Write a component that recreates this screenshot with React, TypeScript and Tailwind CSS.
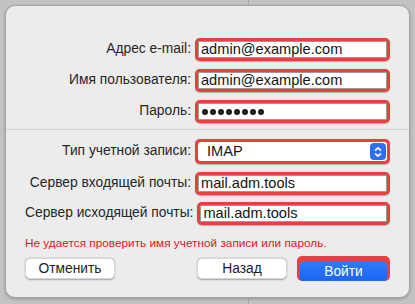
import React from 'react'

const font = { fontFamily: '"Liberation Sans", Arial, sans-serif' }

type FieldProps = { label: string; children: React.ReactNode; className?: string }

const Row = ({ label, children, className = '' }: FieldProps) => (
  <div className={`flex items-center ${className}`}>
    <div className="flex-1 text-right text-[13.8px] text-[#262626] pr-[4px] whitespace-nowrap">{label}</div>
    {children}
  </div>
)

// red highlight ring around a field
const Ring = ({ children, tall = false }: { children: React.ReactNode; tall?: boolean }) => (
  <div className={`w-[195px] ${tall ? 'h-[25px]' : 'h-[23px]'} rounded-[5px] bg-[#e8403f] p-[3px] shadow-[0_0.5px_1px_rgba(0,0,0,0.25)]`}>
    {children}
  </div>
)

const TextBox = ({ value }: { value: string }) => (
  <Ring>
    <div className="h-full bg-white border border-[#9a9a9a] flex items-center pl-[2px] text-[14.6px] text-[#141414] leading-none">
      {value}
    </div>
  </Ring>
)

export default function App() {
  return (
    <div style={font} className="relative w-[415px] h-[304px] bg-[#c2c2c2] p-[5px] overflow-hidden">
      <div className="absolute left-[248px] top-0 h-full w-px bg-[#a9a9a9]" />
      <div className="relative w-[405px] h-[293px] rounded-[10px] bg-[#ececec] border border-[#a3a3a3] shadow-[0_1px_3px_rgba(0,0,0,0.25)] pt-[32px]">
        <div className="pl-[19px] pr-[19px] flex flex-col">
          <Row label="Адрес e-mail:">
            <TextBox value="admin@example.com" />
          </Row>
          <Row label="Имя пользователя:" className="mt-[8px]">
            <TextBox value="admin@example.com" />
          </Row>
          <Row label="Пароль:" className="mt-[8px]">
            <Ring>
              <div className="h-full bg-white border border-[#9a9a9a] flex items-center pl-[3px] gap-[2px]">
                {Array.from({ length: 8 }).map((_, i) => (
                  <span key={i} className="w-[6px] h-[6px] rounded-full bg-[#1e1e1e]" />
                ))}
              </div>
            </Ring>
          </Row>
        </div>

        <div className="mt-[6px] h-px bg-[#d2d2d2]" />

        <div className="pl-[19px] pr-[19px] flex flex-col mt-[9px]">
          <Row label="Тип учетной записи:">
            <Ring tall>
              <div className="h-full bg-white rounded-[3px] flex items-center pl-[9px] pr-[1px] text-[14.6px] text-[#141414] leading-none">
                <span className="flex-1">IMAP</span>
                <div className="w-[16px] h-[17px] rounded-[4px] bg-[#2c6ff5] flex items-center justify-center">
                  <svg width="8" height="12" viewBox="0 0 8 12" fill="none" stroke="white" strokeWidth="1.6" strokeLinecap="round" strokeLinejoin="round">
                    <path d="M1.5 4.2 4 1.8l2.5 2.4" />
                    <path d="M1.5 7.8 4 10.2l2.5-2.4" />
                  </svg>
                </div>
              </div>
            </Ring>
          </Row>
          <Row label="Сервер входящей почты:" className="mt-[8px]">
            <TextBox value="mail.adm.tools" />
          </Row>
          <Row label="Сервер исходящей почты:" className="mt-[7px]">
            <TextBox value="mail.adm.tools" />
          </Row>

          <div className="mt-[10px] text-[11.8px] text-[#e3161a] whitespace-nowrap">
            Не удается проверить имя учетной записи или пароль.
          </div>

          <div className="mt-[3px] flex items-center">
            <button className="w-[90px] h-[21px] rounded-[5px] bg-white text-[13.8px] text-[#1e1e1e] shadow-[0_0.5px_1.5px_rgba(0,0,0,0.3)] border border-[#d6d6d6]">
              Отменить
            </button>
            <div className="flex-1" />
            <button className="w-[90px] h-[21px] rounded-[5px] bg-white text-[13.8px] text-[#1e1e1e] shadow-[0_0.5px_1.5px_rgba(0,0,0,0.3)] border border-[#d6d6d6]">
              Назад
            </button>
            <div className="ml-[10px] w-[93px] h-[25px] rounded-[5px] bg-[#e8403f] p-[3px]">
              <button className="w-full h-full rounded-[3px] bg-gradient-to-b from-[#2f7bfa] to-[#1a64f0] text-[13.8px] font-medium text-white">
                Войти
              </button>
            </div>
          </div>
        </div>
      </div>
    </div>
  )
}
